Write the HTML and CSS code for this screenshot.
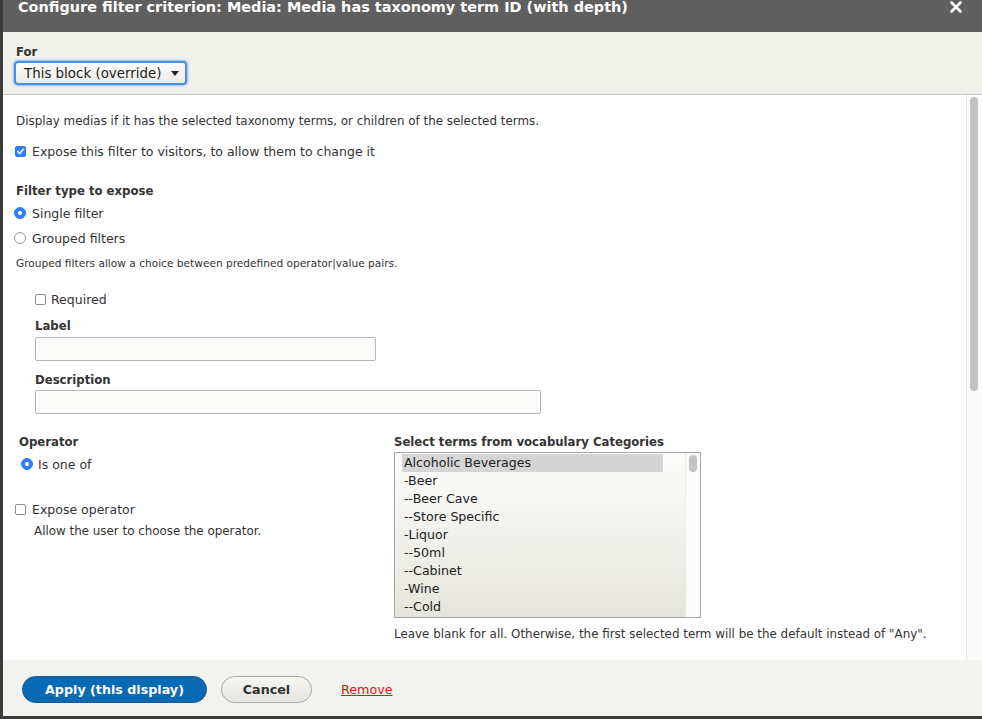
FILE: index.html
```html
<!DOCTYPE html>
<html lang="en">
<head>
<meta charset="utf-8">
<title>Configure filter criterion</title>
<link rel="stylesheet" href="styles.css">
</head>
<body>
<div class="dialog">
  <div class="titlebar">
    <span class="title">Configure filter criterion: Media: Media has taxonomy term ID (with depth)</span>
    <span class="close"><svg width="12" height="12" viewBox="0 0 12 12"><path d="M1.5 1.5 L10.5 10.5 M10.5 1.5 L1.5 10.5" stroke="#fff" stroke-width="2.6" stroke-linecap="round"/></svg></span>
  </div>
  <div class="for-pane">
    <div class="for-label">For</div>
    <div class="select-box"><span>This block (override)</span><span class="caret"></span></div>
  </div>
  <div class="main">
    <div class="content">
      <p class="desc">Display medias if it has the selected taxonomy terms, or children of the selected terms.</p>
      <div class="row row-expose"><span class="cb checked"><svg width="9" height="9" viewBox="0 0 9 9"><path d="M1.8 4.6 L3.7 6.5 L7.3 2.3" fill="none" stroke="#fff" stroke-width="1.6" stroke-linecap="round" stroke-linejoin="round"/></svg></span><span>Expose this filter to visitors, to allow them to change it</span></div>
      <div class="h h-filter">Filter type to expose</div>
      <div class="row row-single"><span class="rb checked"></span><span>Single filter</span></div>
      <div class="row row-grouped"><span class="rb"></span><span>Grouped filters</span></div>
      <p class="desc desc-grouped">Grouped filters allow a choice between predefined operator|value pairs.</p>
      <div class="indent">
        <div class="row row-required"><span class="cb"></span><span>Required</span></div>
        <div class="h h-label">Label</div>
        <div class="text-input w-label"></div>
        <div class="h h-desc">Description</div>
        <div class="text-input w-desc"></div>
      </div>
      <div class="columns">
        <div class="col-left">
          <div class="h h-operator">Operator</div>
          <div class="row row-isone"><span class="rb checked"></span><span>Is one of</span></div>
          <div class="row row-expop"><span class="cb"></span><span>Expose operator</span></div>
          <p class="desc desc-allow">Allow the user to choose the operator.</p>
        </div>
        <div class="col-right">
          <div class="h">Select terms from vocabulary Categories</div>
          <div class="listbox">
            <div class="items">
              <div class="item selected">Alcoholic Beverages</div>
              <div class="item">-Beer</div>
              <div class="item">--Beer Cave</div>
              <div class="item">--Store Specific</div>
              <div class="item">-Liquor</div>
              <div class="item">--50ml</div>
              <div class="item">--Cabinet</div>
              <div class="item">-Wine</div>
              <div class="item">--Cold</div>
            </div>
            <div class="list-track"><div class="list-thumb"></div></div>
          </div>
          <p class="desc desc-help">Leave blank for all. Otherwise, the first selected term will be the default instead of "Any".</p>
        </div>
      </div>
    </div>
    <div class="vscroll"><div class="thumb"></div></div>
  </div>
  <div class="buttons">
    <span class="btn btn-primary">Apply (this display)</span>
    <span class="btn btn-cancel">Cancel</span>
    <a class="remove" href="#">Remove</a>
  </div>
</div>
</body>
</html>
```
FILE: styles.css
```css
* { box-sizing: border-box; }
html, body { margin: 0; padding: 0; }
body {
  width: 982px;
  height: 719px;
  overflow: hidden;
  background: #3b3b3b;
  font-family: "DejaVu Sans", "Liberation Sans", sans-serif;
  color: #333;
}
.dialog {
  margin-left: 3px;
  height: 716px;
  display: flex;
  flex-direction: column;
  background: #fff;
}
.titlebar {
  height: 32px;
  flex: none;
  background: #5f5f5f;
  display: flex;
  justify-content: space-between;
  align-items: flex-start;
  padding: 0 20px 0 15px;
  color: #fff;
}
.title {
  font-weight: bold;
  font-size: 14.45px;
  line-height: 14px;
  white-space: nowrap;
}
.close { display: block; height: 12px; margin-top: 1px; }
.close svg { display: block; }

.for-pane {
  height: 63px;
  flex: none;
  background: #f1f1ec;
  border-bottom: 1px solid #cdcdc8;
  padding: 12px 0 0 11px;
}
.h {
  font-weight: bold;
  font-size: 11.7px;
  line-height: 16px;
  padding-top: 2px;
  white-space: nowrap;
}
.for-label {
  margin-left: 2px;
  font-weight: bold;
  font-size: 11.7px;
  line-height: 16px;
}
.select-box {
  margin-top: 1px;
  width: 173px;
  height: 24px;
  border: 2px solid #4a8fe9;
  border-radius: 4px;
  box-shadow: 0 0 2px 1px rgba(74, 143, 233, 0.55);
  background: linear-gradient(#fdfdfc, #ecebe6);
  display: flex;
  align-items: center;
  padding-left: 8px;
  font-size: 13.4px;
  color: #222;
  white-space: nowrap;
}
.caret {
  margin-left: 10px;
  width: 0;
  height: 0;
  border-left: 4px solid transparent;
  border-right: 4px solid transparent;
  border-top: 5px solid #222;
}

.main {
  flex: 1;
  display: flex;
  min-height: 0;
  overflow: hidden;
}
.content {
  flex: 1;
  padding: 17px 0 0 13px;
}
.vscroll {
  width: 16px;
  flex: none;
  border-left: 1px solid #e6e6e6;
  background: #fafafa;
  padding: 2px 0 0 3px;
}
.thumb {
  width: 8px;
  height: 294px;
  border-radius: 4px;
  background: #c2c2c2;
}

.desc {
  margin: 0;
  font-size: 11.9px;
  line-height: 14px;
  padding-top: 2px;
  white-space: nowrap;
}
.row {
  display: flex;
  align-items: center;
  height: 18px;
  font-size: 12.5px;
  white-space: nowrap;
}
.cb {
  width: 11px;
  height: 11px;
  flex: none;
  border: 1px solid #8d8d8d;
  border-radius: 2px;
  background: #fff;
  margin-left: -1px;
  margin-right: 6px;
  display: flex;
  align-items: center;
  justify-content: center;
}
.cb.checked {
  border-color: #2f7cf0;
  background: #3380f3;
}
.cb svg { display: block; }
.rb {
  width: 12px;
  height: 12px;
  flex: none;
  border: 1px solid #9a9a9a;
  border-radius: 50%;
  background: #fff;
  margin-left: -2px;
  margin-right: 6px;
  display: flex;
  align-items: center;
  justify-content: center;
}
.rb.checked {
  border-color: #2f7cf0;
  background: #3380f3;
}
.rb.checked::after {
  content: "";
  width: 4px;
  height: 4px;
  border-radius: 50%;
  background: #fff;
}

.row-expose { margin-top: 14px; }
.h-filter { margin-top: 21px; }
.row-single { margin-top: 5px; }
.row-grouped { margin-top: 7px; }
.desc.desc-grouped { margin-top: 8px; font-size: 10.6px; line-height: 16px; padding-top: 0; }

.indent { margin-left: 19px; }
.row-required { margin-top: 19px; }
.row-required .cb { margin-left: 0; margin-right: 5px; }
.h-label { margin-top: 8px; }
.text-input {
  margin-top: 3px;
  height: 24px;
  border: 1px solid #b7b7b7;
  border-radius: 2px;
  background: #fcfcfa;
}
.w-label { width: 341px; }
.h-desc { margin-top: 9px; }
.w-desc { width: 506px; margin-top: 2px; }

.columns {
  margin-top: 18px;
  display: flex;
  align-items: flex-start;
}
.col-left { width: 378px; flex: none; }
.h-operator { margin-left: 3px; }
.row-isone { margin-top: 5px; }
.row-isone .rb { margin-left: 5px; margin-right: 5px; }
.row-expop { margin-top: 27px; }
.desc-allow { margin-top: 4px; margin-left: 18px; }

.listbox {
  margin-top: 2px;
  width: 307px;
  height: 166px;
  border: 1px solid #a6a6a6;
  background: linear-gradient(#fcfcfb, #e6e5dd);
  display: flex;
  overflow: hidden;
}
.items {
  flex: 1;
  padding: 1px 0 0 7px;
  overflow: hidden;
}
.item {
  width: 261px;
  height: 18px;
  line-height: 18px;
  padding-left: 2px;
  font-size: 12.6px;
  color: #222;
  white-space: nowrap;
}
.item.selected { background: #d5d5d5; }
.list-track {
  width: 15px;
  flex: none;
  background: #fbfbfa;
  border-left: 1px solid #ecebe6;
  padding: 2px 0 0 3px;
}
.list-thumb {
  width: 8px;
  height: 17px;
  border-radius: 4px;
  background: #c4c4c4;
}
.desc-help { margin-top: 7px; }

.buttons {
  height: 56px;
  flex: none;
  background: #f2f2ee;
  display: flex;
  align-items: flex-start;
  padding: 16px 0 0 19px;
}
.btn {
  height: 27px;
  border-radius: 14px;
  font-weight: bold;
  font-size: 12.7px;
  line-height: 25px;
  text-align: center;
  white-space: nowrap;
}
.btn-primary {
  width: 185px;
  background: #0869b4;
  border: 1px solid #1b5b92;
  color: #fff;
}
.btn-cancel {
  width: 91px;
  margin-left: 14px;
  background: linear-gradient(#f6f6f3, #e5e4df);
  border: 1px solid #a8a8a8;
  color: #333;
}
.remove {
  margin-left: 29px;
  font-size: 12.7px;
  line-height: 27px;
  color: #c8230c;
  text-decoration: underline;
}
```
